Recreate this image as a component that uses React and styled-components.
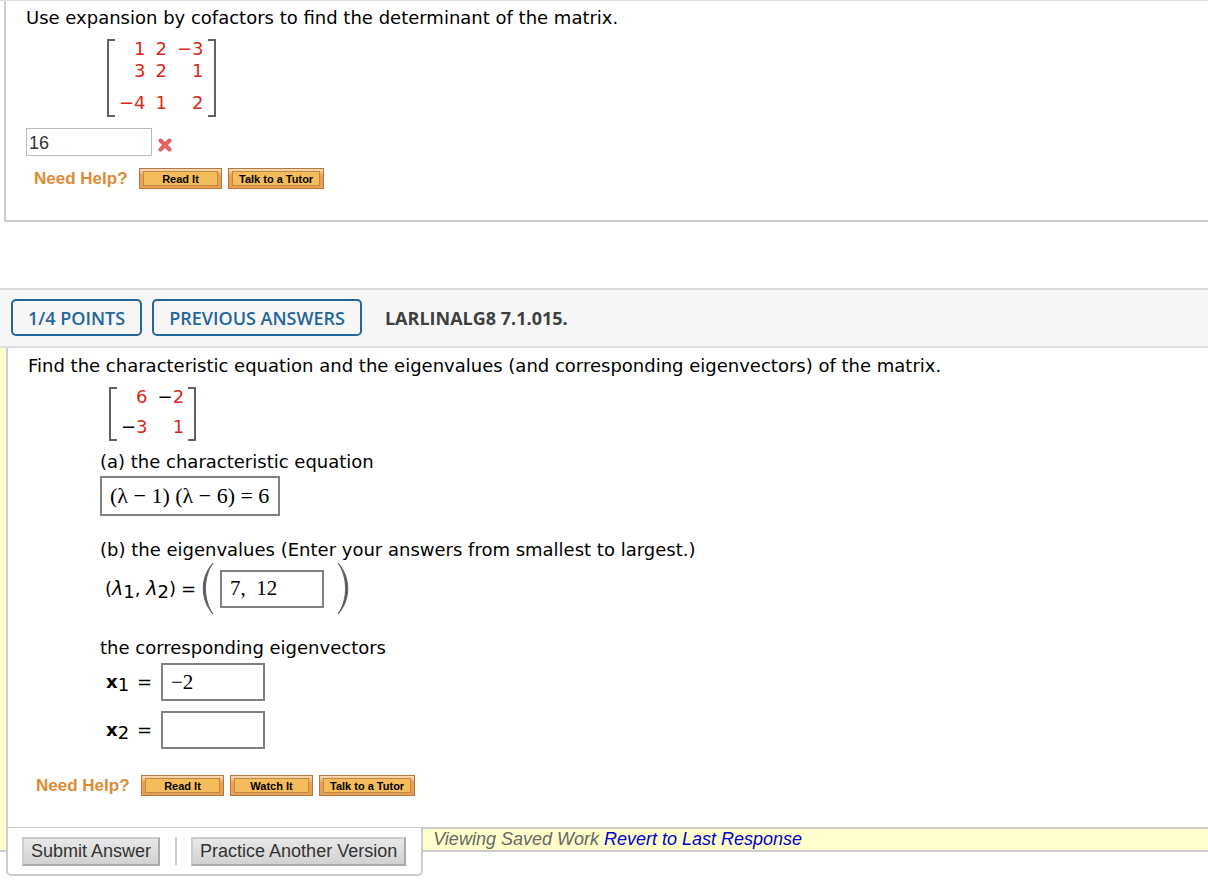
import styled, { createGlobalStyle } from "styled-components";

const GlobalStyle = createGlobalStyle`
  * {
    box-sizing: border-box;
  }
  body {
    margin: 0;
    background-color: white;
    color: black;
    font-family: "DejaVu Sans", Verdana, sans-serif;
    font-size: 18px;
    line-height: 22px;
  }
`

const Page = styled.main`
  padding-bottom: 38px;
  border-top: 1px solid #ddd;
`

const FirstQuestion = styled.section`
  margin-left: 4px;
  padding: 6px 20px 31px;
  border-left: 2px solid #ccc;
  border-bottom: 2px solid #ccc;
`

const Prompt = styled.p`
  margin: 0;
`

const MatrixBox = styled.div`
  display: flex;
  width: max-content;
  margin: 10px 0 0 81px;
`

const Bracket = styled.span`
  width: 8px;
  border: 2px solid #606066;
  border-left-width: ${(props) => (props.$side === "left" ? "2px" : "0")};
  border-right-width: ${(props) => (props.$side === "right" ? "2px" : "0")};
`

const MatrixTable = styled.table`
  margin: 0 4px;
  border-collapse: collapse;
`

const Cell = styled.td`
  padding: ${(props) => props.$gap}px 0 ${(props) => (props.$end ? "4px" : "0")} 10px;
  text-align: right;
  line-height: 20px;
  color: #d8281c;

  &:first-child {
    padding-left: 0;
  }
`

const Sign = styled.span`
  color: ${(props) => (props.$dark ? "black" : "#d8281c")};
`

const AnswerRow = styled.div`
  display: flex;
  align-items: center;
  gap: 6px;
  margin-top: 11px;
`

const AnswerInput = styled.input`
  width: 126px;
  height: 28px;
  padding: 3px 2px 1px;
  border: 1px solid #bbb;
  color: #333;
  font-family: "Liberation Sans", Arial, sans-serif;
  font-size: 18px;
`

const WrongIcon = styled.svg`
  width: 14px;
  height: 14px;
  margin-top: 6px;
`

const HelpRow = styled.div`
  display: flex;
  align-items: center;
  gap: 6px;
  margin: ${(props) => props.$top}px 0 0 8px;
`

const HelpLabel = styled.span`
  width: 99px;
  color: #df8a33;
  font-family: "Liberation Sans", Arial, sans-serif;
  font-size: 17px;
  font-weight: bold;
  line-height: 21px;
`

const HelpButton = styled.button`
  min-width: 83px;
  height: 21px;
  padding: 2px 3px;
  border: 1px solid #ad7a45;
  background: linear-gradient(#fbdcb8, #ec9f4f 35%, #ec9f4f);
  cursor: pointer;
`

const HelpText = styled.span`
  display: block;
  padding: 2px 6px 0;
  border: 1px solid #b98a48;
  background-color: #f4bc5a;
  color: black;
  font-family: "Liberation Sans", Arial, sans-serif;
  font-size: 11px;
  font-weight: bold;
  line-height: 11px;
`

const QuestionHeader = styled.header`
  display: flex;
  align-items: center;
  gap: 10px;
  margin-top: 66px;
  padding: 9px 11px 10px;
  border-top: 2px solid #ddd;
  border-bottom: 2px solid #ddd;
  background-color: #f7f7f7;
  font-family: "Open Sans", sans-serif;
`

const HeaderButton = styled.button`
  height: 37px;
  padding: 0 15px;
  border: 2px solid #24659b;
  border-radius: 5px;
  background-color: #f7f7f7;
  color: #24659b;
  font-family: inherit;
  font-size: 18px;
  font-weight: 600;
  cursor: pointer;
`

const QuestionCode = styled.h2`
  margin: 0 0 0 13px;
  color: #3f3f3f;
  font-size: 18px;
  font-weight: bold;
  line-height: 24px;
`

const SavedFrame = styled.section`
  padding-left: 6px;
  border-bottom: 2px solid #ccc;
  background-color: #ffffcc;
`

const QuestionBody = styled.div`
  padding: 7px 20px 31px;
  border-left: 2px solid #ccc;
  background-color: white;
`

const Parts = styled.div`
  padding-left: 72px;
`

const PartText = styled.p`
  margin: ${(props) => props.$top}px 0 0;
`

const MathInput = styled.input`
  display: block;
  width: ${(props) => (props.$wide ? "180px" : "104px")};
  height: ${(props) => (props.$wide ? "40px" : "38px")};
  padding: 0 8px;
  border: 2px solid #808080;
  background-color: white;
  color: black;
  font-family: "Liberation Serif", serif;
  font-size: ${(props) => (props.$wide ? "22px" : "21px")};
`

const PartInput = styled(MathInput)`
  margin-top: 3px;
`

const EigenRow = styled.div`
  display: flex;
  align-items: center;
  margin: 1px 0 0 5px;
`

const EigenLabel = styled.label`
  display: flex;
  justify-content: space-between;
  width: 91px;
  margin-right: 5px;
  white-space: nowrap;
`

const Sub = styled.sub`
  font-size: 18px;
  line-height: 0;
  vertical-align: -3px;
`

const Lambda = styled.i`
  font-size: 19px;
  line-height: 0;
`

const Paren = styled.svg`
  width: 13px;
  height: 53px;
  margin: ${(props) => (props.$end ? "0 0 0 13px" : "0 6px 0 0")};
`

const VectorRow = styled.div`
  display: flex;
  align-items: center;
  margin: ${(props) => props.$top}px 0 0 6px;
`

const VectorLabel = styled.label`
  display: flex;
  justify-content: space-between;
  width: 46px;
  margin-right: 9px;
  white-space: nowrap;
`

const Footer = styled.footer`
  display: flex;
  align-items: flex-start;
`

const Actions = styled.div`
  display: flex;
  align-items: flex-start;
  gap: 14px;
  height: 49px;
  margin-bottom: -26px;
  padding: 9px 15px 0 14px;
  border: 2px solid #ccc;
  border-top-width: 1px;
  border-radius: 0 0 5px 5px;
  background-color: white;
`

const ActionButton = styled.button`
  height: 29px;
  padding: 0 7px;
  border: 2px solid;
  border-color: #ccc #aaa #aaa #ccc;
  background: linear-gradient(#e8e8e8, #d2d2d2);
  color: #333;
  font-family: "Liberation Sans", Arial, sans-serif;
  font-size: 18px;
  white-space: nowrap;
  cursor: pointer;
`

const Divider = styled.span`
  width: 2px;
  height: 28px;
  margin-left: 1px;
  background-color: #ccc;
`

const SavedNote = styled.div`
  flex: 1;
  height: 23px;
  padding-left: 10px;
  border-top: 2px solid #ccc;
  color: #666;
  font-family: "Liberation Sans", Arial, sans-serif;
  font-style: italic;
  line-height: 21px;
`

const RevertLink = styled.a`
  color: #0000cc;
  text-decoration: none;
`

const firstMatrix = [
  ["1", "2", "−3"],
  ["3", "2", "1"],
  ["−4", "1", "2"],
]

const secondMatrix = [
  ["6", "−2"],
  ["−3", "1"],
]


const Matrix = ({ rows, gaps, darkSigns }) => (
  <MatrixBox>
    <Bracket $side="left" />
    <MatrixTable>
      <tbody>
        {rows.map((row, i) => (
          <tr key={i}>
            {row.map((value, j) => (
              <Cell key={j} $gap={gaps[i]} $end={i === rows.length - 1}>
                {value.startsWith("−") && <Sign $dark={darkSigns}>−</Sign>}
                {value.replace("−", "")}
              </Cell>
            ))}
          </tr>
        ))}
      </tbody>
    </MatrixTable>
    <Bracket $side="right" />
  </MatrixBox>
)

const Help = ({ items, top }) => (
  <HelpRow $top={top}>
    <HelpLabel>Need Help?</HelpLabel>
    {items.map((item) => (
      <HelpButton key={item} type="button">
        <HelpText>{item}</HelpText>
      </HelpButton>
    ))}
  </HelpRow>
)

const App = () => {
  return (
    <>
      <GlobalStyle />
      <Page>
        <FirstQuestion>
          <Prompt>Use expansion by cofactors to find the determinant of the matrix.</Prompt>
          <Matrix rows={firstMatrix} gaps={[0, 2, 12]} />
          <AnswerRow>
            <AnswerInput aria-label="Determinant" defaultValue="16" />
            <WrongIcon viewBox="0 0 14 14" role="img" aria-label="Incorrect">
              <path d="M2.5 2.5L11.5 11.5M11.5 2.5L2.5 11.5" stroke="#d9595a" strokeWidth="4" strokeLinecap="round" />
              <path d="M2.5 2.5L11.5 11.5M11.5 2.5L2.5 11.5" stroke="#ee6663" strokeWidth="2" strokeLinecap="round" />
            </WrongIcon>
          </AnswerRow>
          <Help items={["Read It", "Talk to a Tutor"]} top={12} />
        </FirstQuestion>

        <QuestionHeader>
          <HeaderButton type="button">1/4 POINTS</HeaderButton>
          <HeaderButton type="button">PREVIOUS ANSWERS</HeaderButton>
          <QuestionCode>LARLINALG8 7.1.015.</QuestionCode>
        </QuestionHeader>

        <SavedFrame>
          <QuestionBody>
            <Prompt>
              Find the characteristic equation and the eigenvalues (and corresponding eigenvectors) of the matrix.
            </Prompt>
            <Matrix rows={secondMatrix} gaps={[0, 10]} darkSigns />
            <Parts>
              <PartText $top={10}>
                <label htmlFor="equation">(a) the characteristic equation</label>
              </PartText>
              <PartInput id="equation" $wide defaultValue="(λ − 1) (λ − 6) = 6" />

              <PartText $top={23}>(b) the eigenvalues (Enter your answers from smallest to largest.)</PartText>
              <EigenRow>
                <EigenLabel htmlFor="eigenvalues">
                  <span>(<Lambda>λ</Lambda><Sub>1</Sub>, <Lambda>λ</Lambda><Sub>2</Sub>)</span>
                  <span>=</span>
                </EigenLabel>
                <Paren viewBox="0 0 13 53" aria-hidden="true">
                  <path d="M12 1C-1 15-1 38 12 52C2 38 2 15 12 1Z" fill="#555" stroke="#666" />
                </Paren>
                <MathInput id="eigenvalues" defaultValue="7,  12" />
                <Paren $end viewBox="0 0 13 53" aria-hidden="true">
                  <path d="M1 1C14 15 14 38 1 52C11 38 11 15 1 1Z" fill="#555" stroke="#666" />
                </Paren>
              </EigenRow>

              <PartText $top={22}>the corresponding eigenvectors</PartText>
              <VectorRow $top={4}>
                <VectorLabel htmlFor="vector1">
                  <span><b>x</b><Sub>1</Sub></span>
                  <span>=</span>
                </VectorLabel>
                <MathInput id="vector1" defaultValue="−2" />
              </VectorRow>
              <VectorRow $top={10}>
                <VectorLabel htmlFor="vector2">
                  <span><b>x</b><Sub>2</Sub></span>
                  <span>=</span>
                </VectorLabel>
                <MathInput id="vector2" defaultValue="" />
              </VectorRow>
            </Parts>
            <Help items={["Read It", "Watch It", "Talk to a Tutor"]} top={26} />
          </QuestionBody>

          <Footer>
            <Actions>
              <ActionButton type="button">Submit Answer</ActionButton>
              <Divider />
              <ActionButton type="button">Practice Another Version</ActionButton>
            </Actions>
            <SavedNote>
              Viewing Saved Work <RevertLink href="#last">Revert to Last Response</RevertLink>
            </SavedNote>
          </Footer>
        </SavedFrame>
      </Page>
    </>
  )
}

export default App
